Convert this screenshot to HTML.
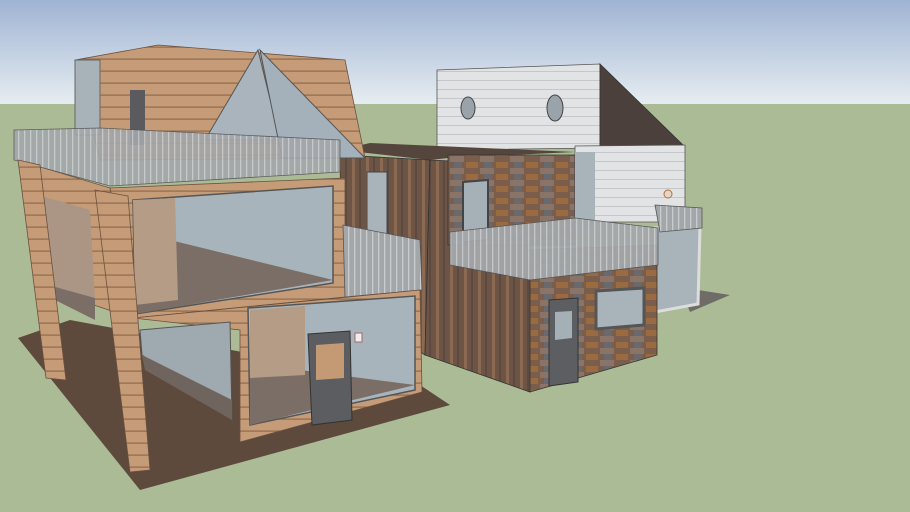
<!DOCTYPE html>
<html><head><meta charset="utf-8"><style>
html,body{margin:0;padding:0;width:910px;height:512px;overflow:hidden;background:#abbb96}
svg{display:block}
</style></head><body>
<svg width="910" height="512" viewBox="0 0 910 512" xmlns="http://www.w3.org/2000/svg">
<defs>
<linearGradient id="sky" x1="0" y1="0" x2="0" y2="1">
<stop offset="0" stop-color="#9fb3d3"/><stop offset="1" stop-color="#e6edf1"/></linearGradient>
<pattern id="wood" width="10" height="12" patternUnits="userSpaceOnUse">
<rect width="10" height="12" fill="#c59c77"/><rect y="10.5" width="10" height="1.2" fill="#8e6a4d"/></pattern>
<pattern id="dark" width="14" height="8" patternUnits="userSpaceOnUse">
<rect width="14" height="8" fill="#6e5444"/><rect x="2" width="3" height="8" fill="#8a6a52"/><rect x="9" width="2" height="8" fill="#5a4a42"/></pattern>
<pattern id="mix" width="30" height="12" patternUnits="userSpaceOnUse">
<rect width="30" height="12" fill="#7a5e4b"/><rect width="14" height="6" fill="#8a7468"/><rect x="16" y="6" width="12" height="6" fill="#9a6a40"/><rect x="4" y="6" width="8" height="6" fill="#6a6a6e"/></pattern>
<pattern id="white" width="10" height="9" patternUnits="userSpaceOnUse">
<rect width="10" height="9" fill="#e2e3e5"/><rect y="8" width="10" height="1" fill="#c4c6c9"/></pattern>
<pattern id="rail" width="6" height="10" patternUnits="userSpaceOnUse">
<rect width="6" height="10" fill="#a3a7aa"/><rect x="0" width="1.3" height="10" fill="#c9cccf"/></pattern>
</defs>
<rect width="910" height="104" fill="url(#sky)"/>
<rect y="104" width="910" height="408" fill="#abbb96"/>

<polygon points="698,290 730,295 690,312 685,300" fill="#6f6b66"/>
<polygon points="437,70 600,64 600,148 437,150" fill="url(#white)" stroke="#555" stroke-width="0.8"/>
<polygon points="600,64 683,145 600,148" fill="#4b403b" stroke="#333" stroke-width="0.8"/>
<polygon points="575,146 685,145 685,222 575,222" fill="url(#white)" stroke="#555" stroke-width="0.8"/>
<ellipse cx="468" cy="108" rx="7" ry="11" fill="#9aa3aa" stroke="#444"/>
<ellipse cx="555" cy="108" rx="8" ry="13" fill="#9aa3aa" stroke="#444"/>
<polygon points="655,228 700,226 698,304 655,312" fill="#a8b3ba" stroke="#ddd" stroke-width="3"/>
<polygon points="655,205 702,208 702,228 660,232" fill="url(#rail)" stroke="#555" stroke-width="0.8"/>
<circle cx="668" cy="194" r="4" fill="#e6d6c6" stroke="#b07040"/>

<polygon points="340,150 370,143 575,152 448,158 430,160" fill="#55463d"/>
<polygon points="340,155 430,160 425,355 342,300" fill="url(#dark)" stroke="#333" stroke-width="0.8"/>
<polygon points="430,160 530,165 530,392 425,355" fill="url(#dark)" stroke="#333" stroke-width="0.8"/>
<polygon points="367,172 387,172 387,235 367,235" fill="#a8b3ba" stroke="#444"/>
<polygon points="448,155 575,155 575,245 448,245" fill="url(#mix)" stroke="#333" stroke-width="0.8"/>
<polygon points="575,152 595,152 595,230 575,230" fill="#a8b3ba"/>
<polygon points="463,182 488,180 488,240 463,242" fill="#a6b0b7" stroke="#444" stroke-width="2"/>
<polygon points="530,250 657,245 657,355 530,392" fill="url(#mix)" stroke="#333" stroke-width="0.8"/>
<polygon points="549,300 578,298 578,382 549,386" fill="#5d5e62" stroke="#333"/>
<polygon points="555,312 572,311 572,338 555,340" fill="#a5afb6"/>
<polygon points="596,291 644,288 644,325 596,329" fill="#a8b3ba" stroke="#555" stroke-width="3"/>
<polygon points="450,232 575,218 658,228 658,265 530,280 450,265" fill="url(#rail)" stroke="#555" stroke-width="0.8" opacity="0.95"/>

<polygon points="18,338 70,320 420,385 450,405 140,490" fill="#5d4a3c"/>

<polygon points="75,60 158,45 345,60 365,158 100,160" fill="url(#wood)" stroke="#6b5040" stroke-width="0.8"/>
<polygon points="75,60 100,60 100,135 75,135" fill="#a7b2b9" stroke="#666"/>
<polygon points="130,90 145,90 145,145 130,145" fill="#5b5b5f"/>
<polygon points="205,140 258,50 280,140" fill="#a9b4bd" stroke="#555"/>
<polygon points="260,50 365,158 282,158" fill="#a5b1ba" stroke="#555"/>

<polygon points="18,160 110,188 133,318 48,290" fill="url(#wood)" stroke="#6b5040" stroke-width="0.8"/>
<polygon points="38,195 90,210 95,300 45,285" fill="#ab9584"/>
<polygon points="48,285 95,298 95,320 55,300" fill="#7b6e67"/>
<polygon points="110,188 345,178 345,297 133,318" fill="url(#wood)" stroke="#6b5040" stroke-width="0.8"/>
<polygon points="133,200 333,186 333,283 135,314" fill="#a8b4bb" stroke="#555" stroke-width="1.5"/>
<polygon points="133,270 170,240 333,280 135,314" fill="#7b6e67"/>
<polygon points="133,200 175,198 178,300 135,305" fill="#b49c86"/>
<polygon points="14,130 100,128 340,140 340,172 110,186 14,160" fill="url(#rail)" stroke="#555" stroke-width="0.8" opacity="0.9"/>
<polygon points="343,225 420,240 422,290 345,297" fill="url(#rail)" stroke="#555" stroke-width="0.8"/>

<polygon points="133,318 420,290 422,392 240,442 240,330" fill="url(#wood)" stroke="#6b5040" stroke-width="0.8"/>
<polygon points="140,330 230,322 232,420 142,355" fill="#9ea9b0" stroke="#555"/>
<polygon points="142,355 232,400 232,420 145,370" fill="#6f645e"/>
<polygon points="248,308 415,296 415,390 250,425" fill="#a8b4bb" stroke="#555" stroke-width="1.5"/>
<polygon points="250,378 300,370 415,385 250,425" fill="#7b6e67"/>
<polygon points="250,310 305,306 305,375 250,378" fill="#b49c86"/>
<polygon points="308,334 350,331 352,420 312,425" fill="#5c5d61" stroke="#333"/>
<polygon points="316,345 344,343 344,378 316,380" fill="#c39a74"/>
<rect x="355" y="333" width="7" height="9" fill="#eee" stroke="#a66"/>

<polygon points="18,160 40,165 66,380 46,378" fill="url(#wood)" stroke="#6b5040" stroke-width="0.8"/>
<polygon points="95,190 128,196 150,470 130,472" fill="url(#wood)" stroke="#6b5040" stroke-width="0.8"/>
</svg>
</body></html>
